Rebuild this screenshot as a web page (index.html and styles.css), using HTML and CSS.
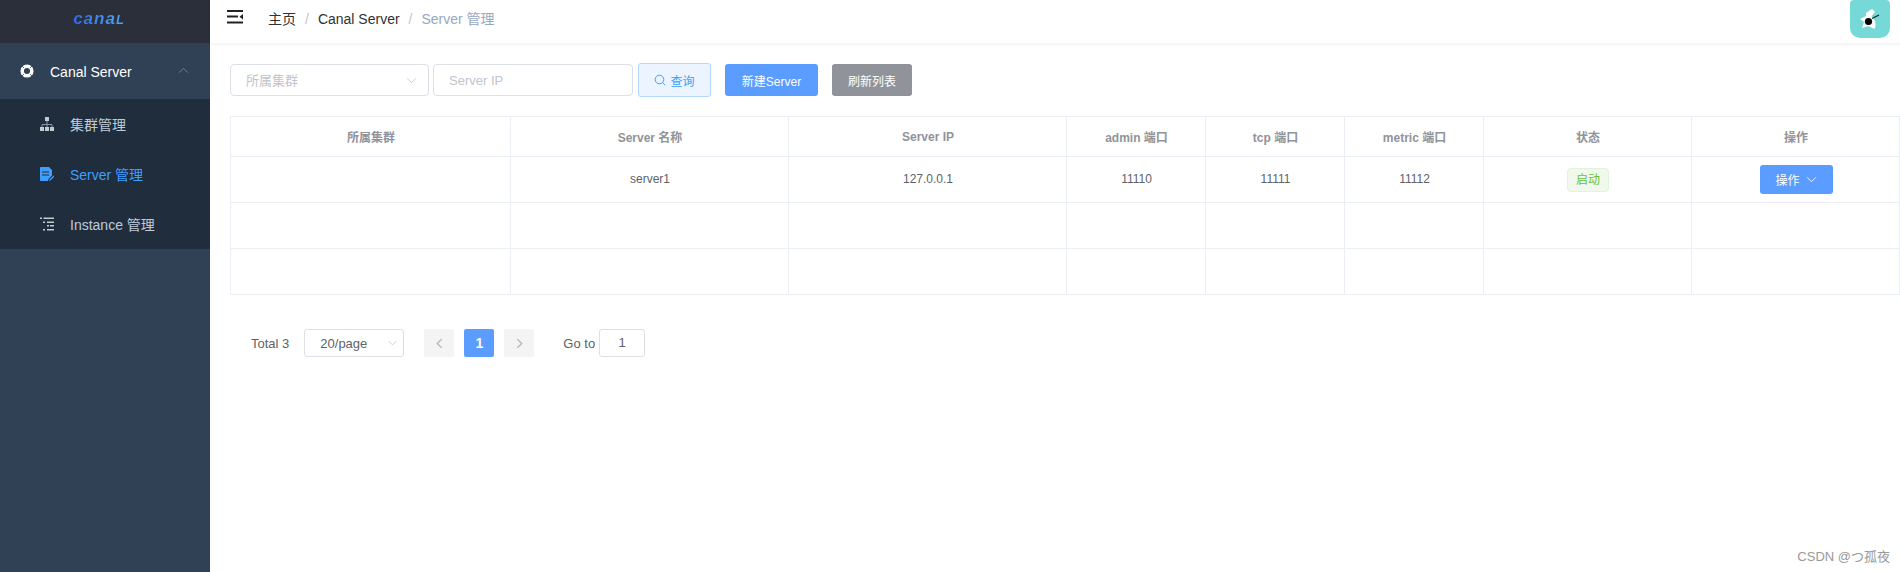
FILE: index.html
```html
<!DOCTYPE html>
<html>
<head>
  <title>Server 管理</title>
  <link rel="stylesheet" href="styles.css">
</head>
<body>
  <div class="app">
    <div class="sidebar">
      <div class="logo"><span class="logo-text">cana<span class="logo-end">L</span></span></div>
      <div class="menu-title">
        <svg class="menu-title-icon" viewBox="0 0 16 16"><path fill="#fff" fill-rule="evenodd" d="M8 .5a7.500 7.500 0 1 1 0 15A7.500 7.500 0 0 1 8 .5zm0 4a3.500 3.500 0 1 0 0 7 3.500 3.500 0 0 0 0-7z"/><path stroke="#304156" stroke-width=".9" d="M2 2l2.500 2.500M14 2l-2.500 2.500M2 14l2.500-2.500M14 14l-2.500-2.500"/></svg>
        <span class="menu-title-text">Canal Server</span>
        <svg class="menu-arrow" viewBox="0 0 12 8"><path fill="none" stroke="#7d8896" stroke-width="1" d="M1 6.500l5-5 5 5"/></svg>
      </div>
      <div class="submenu">
        <div class="submenu-item">
          <svg class="submenu-icon" viewBox="0 0 14 14"><path fill="#c4cad1" d="M5 0h4v4H5zM0 10h4v4H0zM5 10h4v4H5zM10 10h4v4h-4z"/><path fill="none" stroke="#8b95a1" d="M7 4v6M2 10V7.500h10V10"/></svg>
          <span>集群管理</span>
        </div>
        <div class="submenu-item active">
          <svg class="submenu-icon" viewBox="0 0 14 14"><path fill="#409eff" d="M1 0h8l3 3v5.500L8.500 12 8 14H1a1 1 0 0 1-1-1V1a1 1 0 0 1 1-1z"/><path stroke="#1f2d3d" stroke-width="1.200" d="M2 5h7M2 8h7"/><path stroke="#409eff" stroke-width="1.300" d="M9.500 13.500L14 9"/></svg>
          <span>Server 管理</span>
        </div>
        <div class="submenu-item">
          <svg class="submenu-icon" viewBox="0 0 14 14"><path fill="#c4cad1" d="M0 .5h2v1.500H0zM3.500 .5H14v1.500H3.500zM3 4.500h2V6H3zM7 4.500h7V6H7zM7 8h2v1.500H7zM10 8h4v1.500h-4zM3 12h2v1.500H3zM7 12h7v1.500H7z"/></svg>
          <span>Instance 管理</span>
        </div>
      </div>
    </div>

    <div class="main">
      <div class="navbar">
        <svg class="hamburger" viewBox="0 0 16 14"><path fill="#222" d="M0 0h16v2H0zM0 5.500h11v2H0zM0 11.500h16v2H0zM16 4v5.500l-3.500-2.700z"/></svg>
        <div class="breadcrumb">
          <span class="crumb">主页</span>
          <span class="sep">/</span>
          <span class="crumb">Canal Server</span>
          <span class="sep">/</span>
          <span class="crumb current">Server 管理</span>
        </div>
        <div class="avatar">
          <svg viewBox="0 0 40 38" width="40" height="38">
            <path fill="#fff" d="M22 9l3 3-3.500 4 3.500 5 .5 5-1 3-6-3-6.500 2 2-6-4-3 6-3 0-3z"/>
            <circle cx="18.500" cy="21.500" r="3.600" fill="#000"/>
            <path stroke="#222" stroke-width="1.300" d="M22 18.500l7-3.500"/>
          </svg>
        </div>
      </div>

      <div class="content">
        <div class="filters">
          <div class="input select-input">
            <span class="placeholder select-placeholder">所属集群</span>
            <svg class="chevron" viewBox="0 0 12 8"><path fill="none" stroke="#c0c4cc" d="M1 1.500l5 5 5-5"/></svg>
          </div>
          <div class="input ip-input"><span class="placeholder">Server IP</span></div>
          <div class="btn btn-plain">
            <svg class="search-icon" viewBox="0 0 12 12"><circle cx="5.500" cy="5.500" r="4.300" fill="none" stroke="#409eff"/><path stroke="#409eff" d="M8.600 8.600l2.600 2.600"/></svg>
            <span>查询</span>
          </div>
          <div class="btn btn-primary btn-new">新建Server</div>
          <div class="btn btn-gray">刷新列表</div>
        </div>

        <table class="server-table">
          <colgroup>
            <col class="col-cluster"><col class="col-name"><col class="col-ip"><col class="col-port">
            <col class="col-port"><col class="col-port"><col class="col-state"><col class="col-op">
          </colgroup>
          <thead>
            <tr>
              <th>所属集群</th>
              <th>Server 名称</th>
              <th>Server IP</th>
              <th>admin 端口</th>
              <th>tcp 端口</th>
              <th>metric 端口</th>
              <th>状态</th>
              <th>操作</th>
            </tr>
          </thead>
          <tbody>
            <tr>
              <td class="text-cell"></td>
              <td class="text-cell">server1</td>
              <td class="text-cell">127.0.0.1</td>
              <td class="text-cell">11110</td>
              <td class="text-cell">11111</td>
              <td class="text-cell">11112</td>
              <td><span class="tag">启动</span></td>
              <td>
                <span class="btn btn-primary btn-op">操作
                  <svg class="op-arrow" viewBox="0 0 12 8"><path fill="none" stroke="#fff" d="M1 1.500l5 5 5-5"/></svg>
                </span>
              </td>
            </tr>
            <tr><td></td><td></td><td></td><td></td><td></td><td></td><td></td><td></td></tr>
            <tr><td></td><td></td><td></td><td></td><td></td><td></td><td></td><td></td></tr>
          </tbody>
        </table>

        <div class="pagination">
          <span class="total">Total 3</span>
          <div class="page-size">
            <span>20/page</span>
            <svg class="page-chevron" viewBox="0 0 12 8"><path fill="none" stroke="#c0c4cc" d="M1 1.500l5 5 5-5"/></svg>
          </div>
          <div class="page-btn"><svg class="page-arrow" viewBox="0 0 8 12"><path fill="none" stroke="#b4b7bd" stroke-width="1.600" d="M6.500 1L1.500 6l5 5"/></svg></div>
          <div class="page-btn page-current">1</div>
          <div class="page-btn"><svg class="page-arrow" viewBox="0 0 8 12"><path fill="none" stroke="#b4b7bd" stroke-width="1.600" d="M1.500 1l5 5-5 5"/></svg></div>
          <span class="goto">Go to</span>
          <div class="page-input">1</div>
        </div>
      </div>
      <div class="watermark">CSDN @つ孤夜</div>
    </div>
  </div>
</body>
</html>
```

FILE: styles.css
```css
html, body {
  margin: 0;
  padding: 0;
  height: 100%;
}

body {
  font-family: "Liberation Sans", "Noto Sans CJK SC", sans-serif;
  font-size: 14px;
  color: #606266;
  overflow: hidden;
}

.app {
  display: flex;
  height: 572px;
}

.sidebar {
  width: 210px;
  flex-shrink: 0;
  background: #304156;
}

.logo {
  height: 43px;
  background: #2b2f3a;
  display: flex;
  align-items: center;
  justify-content: center;
  padding-right: 12px;
  box-sizing: border-box;
}

.logo-text {
  font-size: 17px;
  font-weight: bold;
  font-style: italic;
  letter-spacing: 1px;
  margin-bottom: 5px;
  background: linear-gradient(90deg, #3068e8, #4fa8f2);
  -webkit-background-clip: text;
  background-clip: text;
  color: transparent;
}

.logo-end {
  font-size: 13px;
}

.menu-title {
  height: 56px;
  display: flex;
  align-items: center;
  padding-left: 20px;
  color: #fff;
}

.menu-title-icon {
  width: 14px;
  height: 14px;
  margin-right: 16px;
}

.menu-title-text {
  flex: 1;
  padding-top: 1px;
}

.menu-arrow {
  width: 11px;
  height: 7px;
  margin-right: 21px;
  margin-top: -2px;
}

.submenu {
  background: #1f2d3d;
}

.submenu-item {
  height: 50px;
  display: flex;
  align-items: center;
  padding-left: 40px;
  color: #bfcbd9;
}

.submenu-item.active {
  color: #409eff;
}

.submenu-icon {
  width: 14px;
  height: 14px;
  margin-right: 16px;
}

.main {
  flex: 1;
  position: relative;
  min-width: 0;
}

.navbar {
  height: 43px;
  display: flex;
  align-items: center;
  box-shadow: 0 1px 4px rgba(0, 21, 41, .08);
  padding-left: 17px;
}

.hamburger {
  width: 16px;
  height: 14px;
  margin-top: -9px;
}

.breadcrumb {
  margin-left: 25px;
  margin-top: -7px;
  display: flex;
  align-items: baseline;
  gap: 9px;
  color: #303133;
}

.crumb.current {
  color: #97a8be;
}

.sep {
  color: #c0c4cc;
}

.avatar {
  width: 40px;
  height: 38px;
  margin-left: auto;
  margin-right: 10px;
  margin-top: -5px;
  background: #76d9d7;
  border-radius: 4px 4px 10px 10px;
}

.avatar svg {
  display: block;
}

.content {
  padding: 20px 0 0 20px;
}

.filters {
  display: flex;
  align-items: center;
  font-size: 12px;
}

.input {
  box-sizing: border-box;
  height: 32px;
  border: 1px solid #dcdfe6;
  border-radius: 4px;
  display: flex;
  align-items: center;
  padding-left: 15px;
  font-size: 13px;
}

.select-input {
  width: 199px;
  margin-right: 4px;
  justify-content: space-between;
}

.select-placeholder {
  padding-bottom: 2px;
}

.ip-input {
  width: 200px;
  margin-right: 5px;
}

.placeholder {
  color: #c0c4cc;
}

.chevron {
  width: 11px;
  height: 7px;
  margin-right: 11px;
}

.btn {
  box-sizing: border-box;
  height: 32px;
  border-radius: 3px;
  display: flex;
  align-items: center;
  justify-content: center;
  font-size: 12px;
}

.btn-plain {
  width: 73px;
  height: 34px;
  color: #409eff;
  background: #ecf5ff;
  border: 1px solid #b3d8ff;
  gap: 4px;
  margin-right: 14px;
}

.search-icon {
  width: 12px;
  height: 12px;
}

.btn-primary {
  background: #5a9cff;
  color: #fff;
}

.btn-new {
  width: 93px;
  margin-right: 14px;
}

.btn-gray {
  width: 80px;
  background: #909399;
  color: #fff;
}

.server-table {
  width: 1669px;
  table-layout: fixed;
  border-collapse: collapse;
  margin-top: 19px;
  font-size: 12px;
  text-align: center;
}

.col-cluster { width: 280px; }
.col-name { width: 278px; }
.col-ip { width: 278px; }
.col-port { width: 139px; }
.col-state { width: 208px; }
.col-op { width: 208px; }

.server-table th,
.server-table td {
  border: 1px solid #ebeef5;
  padding: 0 0 0 1px;
}

.server-table th {
  height: 39px;
  color: #909399;
  font-weight: bold;
}

.server-table td {
  height: 45px;
}

.server-table td.text-cell {
  height: 43px;
  padding-bottom: 2px;
}

.tag {
  display: inline-block;
  box-sizing: border-box;
  height: 24px;
  line-height: 22px;
  padding: 0 8px;
  color: #67c23a;
  background: #f0f9eb;
  border: 1px solid #e1f3d8;
  border-radius: 4px;
}

.btn-op {
  display: inline-flex;
  width: 73px;
  height: 29px;
  gap: 6px;
  vertical-align: middle;
}

.op-arrow {
  width: 11px;
  height: 7px;
}

.pagination {
  display: flex;
  align-items: center;
  margin-top: 34px;
  padding-left: 21px;
  font-size: 13px;
}

.total {
  margin-right: 15px;
}

.page-size {
  box-sizing: border-box;
  width: 100px;
  height: 28px;
  border: 1px solid #dcdfe6;
  border-radius: 3px;
  display: flex;
  align-items: center;
  justify-content: space-between;
  padding: 0 6px 0 15px;
  margin-right: 20px;
}

.page-chevron {
  width: 9px;
  height: 6px;
}

.page-btn {
  box-sizing: border-box;
  width: 30px;
  height: 28px;
  margin-right: 10px;
  background: #f4f4f5;
  border-radius: 2px;
  display: flex;
  align-items: center;
  justify-content: center;
  font-size: 14px;
  font-weight: bold;
}

.page-current {
  background: #5a9cff;
  color: #fff;
}

.page-arrow {
  width: 7px;
  height: 11px;
}

.goto {
  margin-left: 19px;
  margin-right: 4px;
}

.page-input {
  box-sizing: border-box;
  width: 46px;
  height: 28px;
  border: 1px solid #dcdfe6;
  border-radius: 3px;
  text-align: center;
  line-height: 26px;
}

.watermark {
  position: absolute;
  right: 10px;
  bottom: 7px;
  font-size: 13px;
  color: #999;
}
```
